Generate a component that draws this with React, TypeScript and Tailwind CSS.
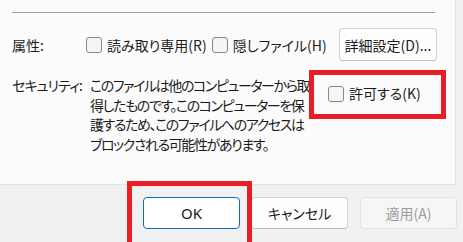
function Check({ label, className = "" }: { label: string; className?: string }) {
  return (
    <label className={`flex items-center whitespace-nowrap ${className}`}>
      <span className="w-[16px] h-[16px] rounded-[3px] border border-[#878787] bg-[#f5f5f5] mr-[5px] shrink-0" />
      <span>{label}</span>
    </label>
  );
}

export default function App() {
  return (
    <div className="relative w-[463px] h-[242px] overflow-hidden bg-[#f1f1f1] text-[14px] text-[#1b1b1b] font-['Noto_Sans_CJK_JP',sans-serif] [font-feature-settings:'palt'] leading-[20px] whitespace-nowrap">
      <div className="w-[456px] h-[185px] bg-[#fbfbfb] border-r border-b border-[#e2e2e2] pt-3 pl-3">
        <div className="w-[423px] h-px bg-[#a0a0a0]" />

        <div className="mt-[15px] flex items-center h-[33px] w-[425px]">
          <span className="w-[74px] shrink-0">属性:</span>
          <Check label="読み取り専用(R)" />
          <Check label="隠しファイル(H)" className="ml-[5px]" />
          <button className="ml-auto w-[98px] h-[33px] rounded-[4px] bg-[#fdfdfd] border border-[#d3d3d3] border-b-[#bcbcbc]">
            詳細設定(D)...
          </button>
        </div>

        <div className="mt-[15px] flex leading-[19.7px]">
          <span className="w-[78px] shrink-0 tracking-[-0.9px]">セキュリティ:</span>
          <p className="w-[238px] shrink-0 tracking-[-1.4px]">
            このファイルは他のコンピューターから取
            <br />
            得したものです。このコンピューターを保
            <br />
            護するため、このファイルへのアクセスは
            <br />
            ブロックされる可能性があります。
          </p>
          <Check label="許可する(K)" className="mt-[8px] h-[20px]" />
        </div>
      </div>

      <div className="flex pl-[143px] pt-[12px]">
        <button className="w-[97px] h-[32px] rounded-[4px] bg-white border border-[#0f6cbd] font-['Noto_Sans',sans-serif] text-[15px]">
          OK
        </button>
        <button className="ml-[11px] w-[97px] h-[32px] rounded-[4px] bg-[#fdfdfd] border border-[#d3d3d3] border-b-[#bcbcbc]">
          キャンセル
        </button>
        <button className="ml-[12px] w-[97px] h-[32px] rounded-[4px] bg-[#f6f6f6] border border-[#e3e3e3] text-[#9d9d9d]">
          適用(A)
        </button>
      </div>

      <div className="absolute left-[309px] top-[70px] w-[137px] h-[49px] border-[5px] border-[#ec1c24]" />
      <div className="absolute left-[127px] top-[181px] w-[125px] h-[66px] border-[5px] border-[#ec1c24]" />
    </div>
  );
}
